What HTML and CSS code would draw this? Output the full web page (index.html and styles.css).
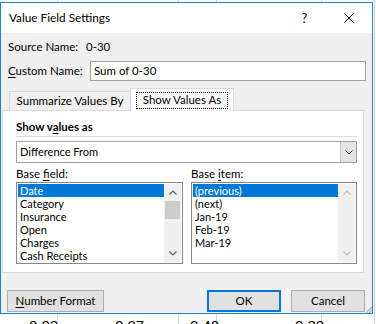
FILE: index.html
```html
<!DOCTYPE html>
<html>
<head>
<meta charset="utf-8">
<title>Value Field Settings</title>
<link rel="stylesheet" href="styles.css">
</head>
<body>
<div class="dialog">
  <div class="titlebar">
    <span class="title">Value Field Settings</span>
    <span class="capbtn help">?</span>
    <span class="capbtn close"><svg width="10" height="10" viewBox="0 0 10 10"><path d="M0.5 0.5L9.5 9.5M9.5 0.5L0.5 9.5" stroke="#000" stroke-width="1" fill="none"/></svg></span>
  </div>
  <div class="row source"><span class="src-lbl">Source Name:</span><span>0-30</span></div>
  <div class="row custom"><span class="cust-lbl"><u>C</u>ustom Name:</span><div class="input">Sum of 0-30</div></div>
  <div class="tabs">
    <div class="tab">Summarize Values By</div>
    <div class="tab active"><span class="focus">Show Values As</span></div>
  </div>
  <div class="panel">
    <div class="heading">Show v<u>a</u>lues as</div>
    <div class="sep"></div>
    <div class="combo">
      <span class="ctext">Difference From</span>
      <span class="cbtn"><svg width="8" height="5" viewBox="0 0 8 5"><path d="M0.5 0.5L4 4L7.5 0.5" fill="none" stroke="#404040" stroke-width="1"/></svg></span>
    </div>
    <div class="lists">
      <div class="col left">
        <div class="flabel">Base <u>f</u>ield:</div>
        <div class="listbox">
          <div class="items">
            <div class="item sel">Date</div>
            <div class="item">Category</div>
            <div class="item">Insurance</div>
            <div class="item">Open</div>
            <div class="item">Charges</div>
            <div class="item">Cash Receipts</div>
          </div>
          <div class="sb">
            <span class="arrow"><svg width="8" height="5" viewBox="0 0 8 5"><path d="M0.5 4.5L4 1L7.5 4.5" fill="none" stroke="#606060" stroke-width="1.2"/></svg></span>
            <span class="thumb"></span>
            <span class="track"></span>
            <span class="arrow"><svg width="8" height="5" viewBox="0 0 8 5"><path d="M0.5 0.5L4 4L7.5 0.5" fill="none" stroke="#606060" stroke-width="1.2"/></svg></span>
          </div>
        </div>
      </div>
      <div class="col right">
        <div class="flabel">Base <u>i</u>tem:</div>
        <div class="listbox">
          <div class="items">
            <div class="item sel">(previous)</div>
            <div class="item">(next)</div>
            <div class="item">Jan-19</div>
            <div class="item">Feb-19</div>
            <div class="item">Mar-19</div>
          </div>
          <div class="sb">
            <span class="arrow"><svg width="8" height="5" viewBox="0 0 8 5"><path d="M0.5 4.5L4 1L7.5 4.5" fill="none" stroke="#c0c0c0" stroke-width="1.2"/></svg></span>
            <span class="track"></span>
            <span class="arrow"><svg width="8" height="5" viewBox="0 0 8 5"><path d="M0.5 0.5L4 4L7.5 0.5" fill="none" stroke="#c0c0c0" stroke-width="1.2"/></svg></span>
          </div>
        </div>
      </div>
    </div>
  </div>
  <div class="buttons">
    <div class="btn numfmt"><u>N</u>umber Format</div>
    <div class="spacer"></div>
    <div class="btn ok">OK</div>
    <div class="btn cancel">Cancel</div>
    <span class="grip"><svg width="7" height="7" viewBox="0 0 7 7"><path d="M7 1L1 7M7 4L4 7" stroke="#b4b4b4" stroke-width="1.2" fill="none"/></svg></span>
  </div>
</div>
<div class="cells">
  <span>0.03</span><span>0.07</span><span>0.40</span><span>0.38</span>
</div>
</body>
</html>
```

FILE: styles.css
```css
* { box-sizing: border-box; }
html, body { margin: 0; padding: 0; }
body {
  width: 376px;
  height: 324px;
  overflow: hidden;
  padding-top: 2px;
  font-family: Lato, "Noto Sans", sans-serif;
  font-size: 11.5px;
  line-height: 16px;
  color: #000;
  background-color: #fff;
  background-image:
    linear-gradient(#d4d4d4, #d4d4d4),
    linear-gradient(#d4d4d4, #d4d4d4),
    linear-gradient(#d4d4d4, #d4d4d4),
    linear-gradient(#d4d4d4, #d4d4d4),
    linear-gradient(#d4d4d4, #d4d4d4);
  background-size: 1px 100%;
  background-repeat: no-repeat;
  background-position: 57px 0, 178px 0, 216px 0, 321px 0, 374px 0;
}
u { text-decoration: underline; text-underline-offset: 2px; }

.dialog {
  width: 373px;
  height: 312px;
  border: 1px solid #1883d7;
  background: #f0f0f0;
  display: flex;
  flex-direction: column;
}

.titlebar {
  height: 30px;
  flex: none;
  background: #fff;
  display: flex;
  align-items: center;
  padding-left: 8px;
}
.title { flex: 1; white-space: nowrap; font-size: 11.8px; }
.capbtn {
  width: 46px;
  height: 30px;
  flex: none;
  display: flex;
  align-items: center;
  justify-content: center;
}
.help { padding-left: 3px; font-size: 13px; }

.row { display: flex; flex: none; white-space: nowrap; }
.source { margin: 6px 0 0 7px; height: 16px; }
.src-lbl { width: 78px; flex: none; }
.custom { margin: 6px 0 0 7px; height: 20px; align-items: center; }
.cust-lbl { width: 82px; flex: none; }
.input {
  flex: none;
  width: 276px;
  height: 20px;
  border: 1px solid #a0a0a0;
  background: #fff;
  padding-left: 3px;
  line-height: 18px;
}

.tabs {
  flex: none;
  margin: 7px 0 0 8px;
  height: 22px;
  display: flex;
  align-items: flex-end;
}
.tab {
  flex: none;
  height: 19px;
  width: 121px;
  border: 1px solid #d9d9d9;
  border-right: none;
  border-bottom: none;
  background: #f0f0f0;
  text-align: center;
  padding-top: 1px;
  white-space: nowrap;
}
.tab.active {
  position: relative;
  z-index: 1;
  width: 104px;
  height: 23px;
  margin-bottom: -1px;
  border-right: 1px solid #d9d9d9;
  background: #fff;
  padding-top: 3px;
  display: flex;
  justify-content: center;
  align-items: flex-start;
}
.focus {
  display: block;
  width: 92px;
  height: 17px;
  border: 1px dotted #000;
  line-height: 14px;
}

.panel {
  flex: none;
  margin-left: 1px;
  width: 362px;
  height: 163px;
  border: 1px solid #d9d9d9;
  background: #fff;
  padding: 8px 6px 8px 13px;
  display: flex;
  flex-direction: column;
}
.heading { font-weight: bold; height: 16px; }
.sep { height: 1px; margin-top: 1px; background: #dcdcdc; }
.combo {
  margin-top: 4px;
  height: 22px;
  border: 1px solid #a0a0a0;
  background: #fff;
  display: flex;
}
.ctext { flex: 1; padding-left: 3px; line-height: 19px; font-size: 11px; }
.cbtn {
  width: 16px;
  height: 20px;
  background: #e5e5e5;
  border-left: 1px solid #c4c4c4;
  display: flex;
  align-items: center;
  justify-content: center;
}
.lists { display: flex; gap: 8px; margin-top: 3px; }
.col.left { width: 167px; }
.col.right { width: 166px; }
.flabel { height: 16px; }
.listbox {
  height: 82px;
  border: 1px solid #828790;
  padding: 1px;
  background: #fff;
  display: flex;
}
.items { flex: 1; display: flex; flex-direction: column; }
.item { height: 13px; line-height: 13px; padding-left: 2px; white-space: nowrap; font-size: 11px; }
.item.sel { background: #0078d7; color: #fff; }
.sb {
  width: 17px;
  background: #f0f0f0;
  display: flex;
  flex-direction: column;
  align-items: center;
}
.arrow {
  width: 17px;
  height: 17px;
  display: flex;
  align-items: center;
  justify-content: center;
  flex: none;
}
.thumb { width: 15px; height: 18px; background: #cdcdcd; flex: none; }
.track { flex: 1; }

.buttons {
  flex: none;
  display: flex;
  margin-top: 17px;
  padding: 0 0 0 6px;
  height: 22px;
}
.spacer { flex: 1; }
.btn {
  height: 22px;
  border: 1px solid #adadad;
  background: #e1e1e1;
  text-align: center;
  line-height: 19px;
}
.numfmt { width: 97px; }
.ok { width: 74px; border: 2px solid #0078d7; line-height: 17px; }
.cancel { width: 74px; margin-left: 10px; }
.grip {
  flex: none;
  width: 7px;
  height: 7px;
  align-self: flex-end;
  margin-bottom: -1px;
  display: flex;
}

.cells {
  margin-top: 3px;
  padding-left: 29px;
  display: grid;
  grid-template-columns: 86px 75px 105px auto;
  font-family: "Liberation Sans", Arial, sans-serif;
  font-size: 15px;
  line-height: 18px;
}
```
